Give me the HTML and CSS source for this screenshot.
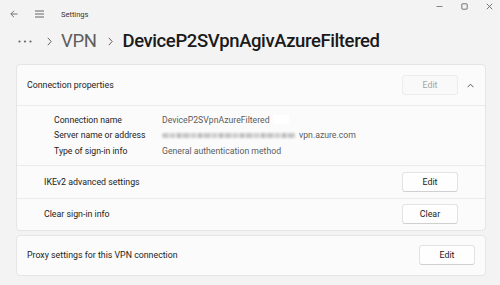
FILE: index.html
```html
<!DOCTYPE html>
<html>
<head>
<meta charset="utf-8">
<link rel="stylesheet" href="styles.css">
</head>
<body>
<div class="titlebar">
  <div class="tb-left">
    <svg class="ic-back" width="8" height="8" viewBox="0 0 8 8"><path d="M4 0.8 L0.8 4 L4 7.2 M0.8 4 H7.5" fill="none" stroke="#666" stroke-width="0.9"/></svg>
    <svg class="ic-menu" width="9" height="8" viewBox="0 0 9 8"><path d="M0 1 H9 M0 4 H9 M0 7 H9" fill="none" stroke="#555" stroke-width="0.9"/></svg>
    <span class="app-title">Settings</span>
  </div>
  <div class="tb-right">
    <svg width="7" height="7" viewBox="0 0 7 7"><path d="M0.5 3.5 H6.5" stroke="#666" stroke-width="0.8"/></svg>
    <svg width="7" height="7" viewBox="0 0 7 7"><rect x="0.8" y="0.8" width="5.4" height="5.4" rx="0.6" fill="none" stroke="#555" stroke-width="0.8"/></svg>
    <svg width="7" height="7" viewBox="0 0 7 7"><path d="M0.8 0.8 L6.2 6.2 M6.2 0.8 L0.8 6.2" stroke="#555" stroke-width="0.8"/></svg>
  </div>
</div>
<div class="crumbs">
  <svg class="dots" width="14" height="3" viewBox="0 0 14 3"><circle cx="1.5" cy="1.5" r="1.1" fill="#666"/><circle cx="7" cy="1.5" r="1.1" fill="#666"/><circle cx="12.5" cy="1.5" r="1.1" fill="#666"/></svg>
  <svg class="sep" width="5" height="9" viewBox="0 0 5 9"><path d="M0.8 0.8 L4.2 4.5 L0.8 8.2" fill="none" stroke="#555" stroke-width="0.9"/></svg>
  <span class="crumb">VPN</span>
  <svg class="sep" width="5" height="9" viewBox="0 0 5 9"><path d="M0.8 0.8 L4.2 4.5 L0.8 8.2" fill="none" stroke="#555" stroke-width="0.9"/></svg>
  <span class="crumb current">DeviceP2SVpnAgivAzureFiltered</span>
</div>
<div class="content">
  <div class="card">
    <div class="card-head">
      <span class="label">Connection properties</span>
      <div class="head-actions">
        <button class="btn disabled">Edit</button>
        <svg class="chev" width="7" height="5" viewBox="0 0 7 5"><path d="M0.6 4.2 L3.5 1.2 L6.4 4.2" fill="none" stroke="#333" stroke-width="0.8"/></svg>
      </div>
    </div>
    <div class="details">
      <div class="detail-row"><span class="dkey">Connection name</span><span class="dval">DeviceP2SVpnAzureFiltered<span class="mask"></span></span></div>
      <div class="detail-row"><span class="dkey">Server name or address</span><span class="dval"><span class="blur"></span>vpn.azure.com</span></div>
      <div class="detail-row"><span class="dkey">Type of sign-in info</span><span class="dval">General authentication method</span></div>
    </div>
    <div class="row">
      <span class="label indent">IKEv2 advanced settings</span>
      <button class="btn">Edit</button>
    </div>
    <div class="row">
      <span class="label indent">Clear sign-in info</span>
      <button class="btn">Clear</button>
    </div>
  </div>
  <div class="card proxy">
    <span class="label">Proxy settings for this VPN connection</span>
    <button class="btn">Edit</button>
  </div>
</div>
</body>
</html>
```
FILE: styles.css
```css
* { box-sizing: border-box; }
body {
  margin: 0;
  background: #f3f3f3;
  font-family: Roboto, "Noto Sans", sans-serif;
  color: #1b1b1b;
  width: 500px;
  height: 285px;
  overflow: hidden;
}
.titlebar {
  height: 28px;
  display: flex;
  justify-content: space-between;
  align-items: center;
}
.tb-left {
  display: flex;
  align-items: center;
  padding-left: 10px;
}
.ic-back { margin-right: 17px; }
.ic-menu { margin-right: 17px; }
.app-title {
  font-size: 7.5px;
  color: #333;
}
.tb-right {
  display: flex;
  align-items: center;
  gap: 18px;
  padding-right: 7px;
  align-self: flex-start;
  padding-top: 3px;
}
.crumbs {
  display: flex;
  align-items: center;
  padding-left: 18px;
  height: 26px;
}
.dots { margin-right: 15px; margin-top: 1px; }
.sep { margin-right: 9px; }
.crumb {
  font-size: 18.5px;
  letter-spacing: -0.4px;
  line-height: 24px;
  color: #5e5e5e;
  margin-right: 12px;
}
.crumb.current {
  color: #1a1a1a;
  font-weight: 500;
  font-size: 18.5px;
  letter-spacing: -0.4px;
}
.content {
  padding: 10px 14px 0 16px;
}
.card {
  background: #fbfbfb;
  border: 1px solid #e5e5e5;
  border-radius: 4px;
}
.card-head {
  height: 41px;
  display: flex;
  align-items: center;
  justify-content: space-between;
  padding-left: 10px;
  border-bottom: 1px solid #ebebeb;
}
.label {
  font-size: 8.8px;
  color: #1b1b1b;
}
.label.indent { padding-left: 27px; }
.head-actions {
  display: flex;
  align-items: center;
}
.chev { margin: 0 11px 0 9px; }
.btn {
  width: 56px;
  height: 20px;
  font-family: inherit;
  font-size: 8.8px;
  color: #1b1b1b;
  background: #fefefe;
  border: 1px solid #e3e3e3;
  border-bottom-color: #d0d0d0;
  border-radius: 3px;
  padding: 0;
}
.btn.disabled {
  color: #a4a4a4;
  background: #f9f9f9;
  border-color: #ececec;
}
.details {
  padding: 6px 0 6px 37px;
  border-bottom: 1px solid #ebebeb;
}
.detail-row {
  display: flex;
  height: 15.5px;
  align-items: center;
}
.dkey {
  width: 108px;
  font-size: 8.7px;
  color: #1b1b1b;
}
.dval {
  font-size: 8.7px;
  color: #5c5c5c;
  display: flex;
  align-items: center;
}
.mask {
  display: inline-block;
  width: 16px;
  height: 9px;
  background: #ffffff;
  margin-left: 3px;
}
.blur {
  display: inline-block;
  width: 134px;
  height: 5px;
  margin-right: 3px;
  border-radius: 2px;
  background: repeating-linear-gradient(90deg, #c6c6c6 0 6px, #e2e2e2 6px 8px, #cfcfcf 8px 13px, #e6e6e6 13px 15px, #bdbdbd 15px 19px, #e0e0e0 19px 21px);
  filter: blur(1.3px);
}
.row {
  height: 32px;
  display: flex;
  align-items: center;
  justify-content: space-between;
  padding-right: 27px;
}
.row + .row { border-top: 1px solid #ebebeb; }
.card.proxy {
  margin-top: 4px;
  height: 41px;
  display: flex;
  align-items: center;
  justify-content: space-between;
  padding: 0 10px;
}
```
